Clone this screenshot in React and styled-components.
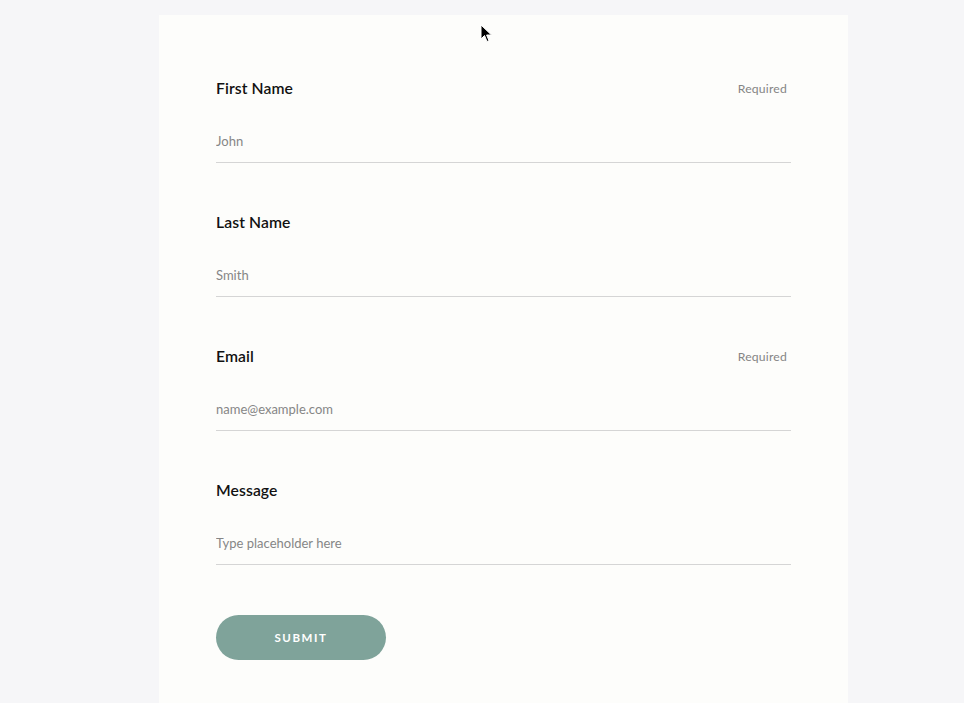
import React from "react";
import styled, { createGlobalStyle } from "styled-components";

const Global = createGlobalStyle`
  html, body { margin: 0; padding: 0; background: #f6f6f8; }
  body { font-family: "Lato", "Liberation Sans", sans-serif; }
  * { box-sizing: border-box; }
`;

const Page = styled.div`
  position: relative;
  min-height: 703px;
  padding-top: 15px;
  padding-left: 159px;
`;

const Card = styled.form`
  width: 689px;
  min-height: 688px;
  background: #fdfdfb;
  padding: 63px 57px 40px;
  display: flex;
  flex-direction: column;
`;

const Field = styled.div`
  display: flex;
  flex-direction: column;
  margin-bottom: 49px;
`;

const LabelRow = styled.div`
  display: flex;
  justify-content: space-between;
  align-items: center;
  height: 20px;
  padding-right: 4px;
`;

const Label = styled.label`
  font-family: "Lato", "Liberation Sans", sans-serif;
  font-size: 15.7px;
  font-weight: 600;
  color: #111;
  letter-spacing: 0.1px;
`;

const Req = styled.span`
  font-size: 12.2px;
  color: #858585;
  letter-spacing: 0.2px;
`;

const Input = styled.input`
  margin-top: 25px;
  height: 40px;
  border: none;
  border-bottom: 1px solid #d5d5d5;
  background: transparent;
  padding: 0 0 4px;
  font-family: "Lato", "Liberation Sans", sans-serif;
  font-size: 13px;
  color: #333;
  outline: none;
  &::placeholder { color: #868686; }
`;

const ButtonRow = styled.div`
  margin-top: 1px;
`;

const Button = styled.button`
  width: 170px;
  height: 45px;
  border: none;
  border-radius: 23px;
  background: #7fa39a;
  color: #fff;
  font-family: "Lato", "Liberation Sans", sans-serif;
  font-weight: 700;
  font-size: 11.5px;
  letter-spacing: 1.6px;
  cursor: pointer;
  padding-top: 1px;
`;

const Cursor = styled.svg`
  position: absolute;
  left: 480px;
  top: 24px;
  width: 13px;
  height: 20px;
`;

const fields = [
  { label: "First Name", placeholder: "John", required: true },
  { label: "Last Name", placeholder: "Smith" },
  { label: "Email", placeholder: "name@example.com", required: true },
  { label: "Message", placeholder: "Type placeholder here" },
];

export default function App() {
  return (
    <Page>
      <Global />
      <Card onSubmit={(e) => e.preventDefault()}>
        {fields.map((f) => (
          <Field key={f.label}>
            <LabelRow>
              <Label>{f.label}</Label>
              {f.required && <Req>Required</Req>}
            </LabelRow>
            <Input placeholder={f.placeholder} />
          </Field>
        ))}
        <ButtonRow>
          <Button type="submit">SUBMIT</Button>
        </ButtonRow>
      </Card>
      <Cursor viewBox="0 0 13 20">
        <path d="M1 1 L1 15 L4.5 11.5 L7 17.5 L9 16.7 L6.6 11 L11.5 11 Z" fill="#000" stroke="#fff" strokeWidth="1" strokeLinejoin="round" />
      </Cursor>
    </Page>
  );
}
